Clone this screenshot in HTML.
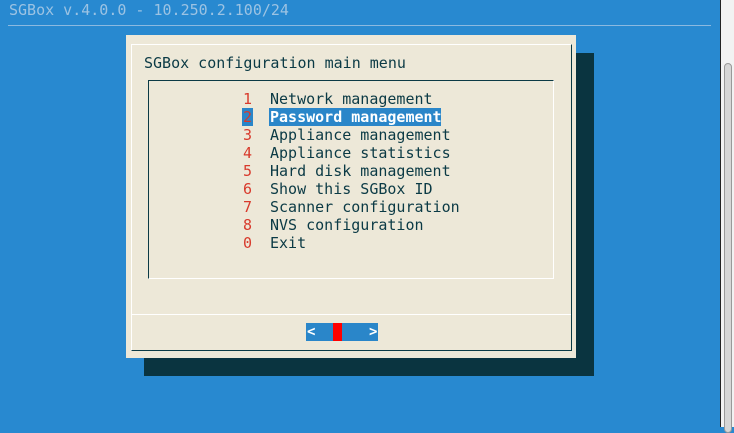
<!DOCTYPE html>
<html><head><meta charset="utf-8"><style>
*{margin:0;padding:0;box-sizing:border-box}
body{width:734px;height:427px;background:#2889d0;position:relative;overflow:hidden;font-family:"DejaVu Sans Mono","Liberation Mono",monospace;font-size:15px;color:#0b3a45}
.a{position:absolute}
.t{white-space:pre;line-height:18px}
</style></head><body>
<div class="a t" style="left:9px;top:1px;color:#9cc3e3;font-size:15px;line-height:18px">SGBox v.4.0.0 - 10.250.2.100/24</div>
<div class="a" style="left:8px;top:25px;width:703px;height:1px;background:#8bb9e0"></div>
<div class="a" style="left:720px;top:0;width:1px;height:427px;background:#222"></div>
<div class="a" style="left:721px;top:0;width:13px;height:427px;background:#f2f2f2"></div>
<div class="a" style="left:724px;top:63px;width:8px;height:370px;background:#d6d6d6;border:1px solid #999;border-radius:4px"></div>

<div class="a" style="left:144px;top:53px;width:450px;height:323px;background:#0a3440"></div>
<div class="a" style="left:126px;top:35px;width:450px;height:323px;background:#ede8d8"></div>
<div class="a" style="left:131px;top:44px;width:441px;height:307px;border-top:1px solid #fff;border-left:1px solid #fff;border-right:1px solid #0b3a45;border-bottom:1px solid #0b3a45"></div>
<div class="a" style="left:131px;top:314px;width:440px;height:1px;background:#fff"></div>
<div class="a t" style="left:144px;top:54px">SGBox configuration main menu</div>
<div class="a" style="left:148px;top:80px;width:406px;height:199px;border-top:1px solid #0b3a45;border-left:1px solid #0b3a45;border-right:1px solid #fff;border-bottom:1px solid #fff"></div>
<div class="a" style="left:269px;top:108px;width:172px;height:18px;background:#2a86c9"></div>
<div class="a" style="left:242px;top:108px;width:11px;height:18px;background:#2a86c9"></div>
<div class="a t" style="left:243px;top:90px;color:#d83a2c">1
2
3
4
5
6
7
8
0</div>
<div class="a t" style="left:270px;top:90px">Network management
<span style="color:#fff;font-weight:bold">Password management</span>
Appliance management
Appliance statistics
Hard disk management
Show this SGBox ID
Scanner configuration
NVS configuration
Exit</div>
<div class="a" style="left:306px;top:323px;width:72px;height:18px;background:#2a86c9"></div>
<div class="a" style="left:333px;top:323px;width:9px;height:18px;background:#f00"></div>
<div class="a t" style="left:307px;top:323px;color:#fff;font-weight:bold;font-size:14px">&lt;</div>
<div class="a t" style="left:369px;top:323px;color:#fff;font-weight:bold;font-size:14px">&gt;</div>
</body></html>
